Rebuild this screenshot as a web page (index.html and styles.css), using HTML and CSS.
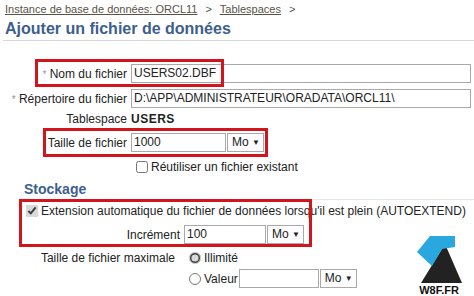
FILE: index.html
```html
<!DOCTYPE html>
<html lang="fr">
<head>
<meta charset="UTF-8" />
<title>Ajouter un fichier de données</title>
<link rel="stylesheet" href="styles.css">
</head>
<body>

<div class="page">
  <div class="crumbs">
    <a href="#">Instance de base de données: ORCL11</a>
    <span class="sep">&gt;</span>
    <a href="#">Tablespaces</a>
    <span class="sep">&gt;</span>
  </div>
  <h1>Ajouter un fichier de données</h1>

  <div class="form">
    <div class="row tall">
      <label><span class="req">*</span> Nom du fichier</label>
      <div class="ctl"><span class="input wide">USERS02.DBF</span></div>
    </div>
    <div class="row tall">
      <label><span class="req">*</span> Répertoire du fichier</label>
      <div class="ctl"><span class="input wide">D:\APP\ADMINISTRATEUR\ORADATA\ORCL11\</span></div>
    </div>
    <div class="row text">
      <label>Tablespace</label>
      <div class="ctl"><b>USERS</b></div>
    </div>
    <div class="row tall">
      <label>Taille de fichier</label>
      <div class="ctl">
        <span class="input size">1000</span>
        <span class="select">Mo <i>▼</i></span>
      </div>
    </div>
    <div class="row check">
      <label></label>
      <div class="ctl"><input type="checkbox"> Réutiliser un fichier existant</div>
    </div>
  </div>

  <h2>Stockage</h2>

  <div class="storage">
    <div class="auto"><input type="checkbox" checked> Extension automatique du fichier de données lorsqu'il est plein (AUTOEXTEND)</div>
    <div class="srow inc">
      <label>Incrément</label>
      <div class="ctl">
        <span class="input step">100</span>
        <span class="select">Mo <i>▼</i></span>
      </div>
    </div>
    <div class="srow">
      <label class="max">Taille de fichier maximale</label>
      <div class="ctl"><input type="radio" name="max" checked> Illimité</div>
    </div>
    <div class="srow">
      <label></label>
      <div class="ctl">
        <input type="radio" name="max"> Valeur<span class="input val"></span>
        <span class="select">Mo <i>▼</i></span>
      </div>
    </div>
  </div>

  <div class="mark m1"></div>
  <div class="mark m2"></div>
  <div class="mark m3"></div>

  <div class="logo">
    <svg width="50" height="50" viewBox="0 0 50 50">
      <polygon points="31,9 48,48 7,48" fill="#222"/>
      <polygon points="3,17 16,1 41,1 41,12 28,14 18,31" fill="#29a8e0"/>
    </svg>
    <span>W8F.FR</span>
  </div>
</div>

</body>
</html>
```

FILE: styles.css
```css
body {
  margin: 0;
  background: #fff;
  font-family: "Liberation Sans", Arial, sans-serif;
  font-size: 12px;
  color: #222;
}

.page {
  position: relative;
  width: 474px;
  height: 296px;
  overflow: hidden;
}

.crumbs {
  height: 20px;
  padding-left: 5px;
  line-height: 19px;
  font-size: 11px;
  color: #5a5246;
}

.crumbs a {
  color: #5a5246;
  text-decoration: underline;
}

.crumbs .sep {
  margin: 0 5px;
}

h1 {
  margin: 0 0 0 3px;
  padding-left: 2px;
  height: 20px;
  line-height: 18px;
  font-size: 16px;
  font-weight: bold;
  color: #3d5e8e;
  border-bottom: 1px solid #d8d8d8;
}

.form {
  margin-top: 20px;
}

.row {
  display: grid;
  grid-template-columns: 127px auto;
  column-gap: 4px;
  align-items: center;
}

.row label {
  text-align: right;
  white-space: nowrap;
}

.row.tall { height: 25px; }
.row.text { align-items: start; padding-top: 1px; height: 18px; }
.row.check { height: 24px; }

.req {
  color: #999;
  font-size: 10px;
}

.ctl {
  display: flex;
  align-items: center;
  white-space: nowrap;
}

.ctl b {
  font-size: 12px;
  letter-spacing: 0.5px;
}

.input {
  display: inline-block;
  box-sizing: border-box;
  height: 19px;
  line-height: 17px;
  padding-left: 2px;
  border: 1px solid #a9a9a9;
  background: #fff;
  font-size: 12px;
}

.input.wide { width: 340px; }
.input.size { width: 95px; }
.input.step { width: 82px; }
.input.val { width: 80px; margin-left: 1px; }

.select {
  display: inline-block;
  box-sizing: border-box;
  height: 19px;
  line-height: 17px;
  width: 37px;
  margin-left: 1px;
  padding-left: 4px;
  border: 1px solid #a9a9a9;
  background: #fdfdfd;
}

.select i {
  font-style: normal;
  font-size: 8px;
  vertical-align: 1px;
}

input[type=checkbox],
input[type=radio] {
  margin: 0 3px 0 5px;
  width: 12px;
  height: 12px;
  accent-color: #d9d9d9;
}

h2 {
  margin: 0 0 0 20px;
  padding-left: 4px;
  height: 20px;
  line-height: 20px;
  font-size: 14px;
  font-weight: bold;
  color: #3d5e8e;
  border-bottom: 1px solid #e8e8e8;
}

.storage .auto {
  height: 22px;
  display: flex;
  align-items: center;
  padding-left: 21px;
  white-space: nowrap;
}

.srow {
  display: grid;
  grid-template-columns: 180px auto;
  column-gap: 4px;
  align-items: center;
  height: 21px;
}

.srow.inc {
  height: 25px;
}

.srow label {
  text-align: right;
  white-space: nowrap;
}

.srow label.max {
  padding-right: 5px;
}

.mark {
  position: absolute;
  border: 3px solid #d2141c;
  box-sizing: border-box;
}

.m1 { left: 35px; top: 59px; width: 189px; height: 28px; }
.m2 { left: 43px; top: 128px; width: 225px; height: 29px; }
.m3 { left: 19px; top: 199px; width: 293px; height: 48px; }

.logo {
  position: absolute;
  left: 413px;
  top: 235px;
  width: 52px;
  text-align: center;
}

.logo svg {
  display: block;
  margin: 0 auto;
}

.logo span {
  display: block;
  margin-top: -1px;
  font-size: 11px;
  font-weight: bold;
  color: #111;
}
```
